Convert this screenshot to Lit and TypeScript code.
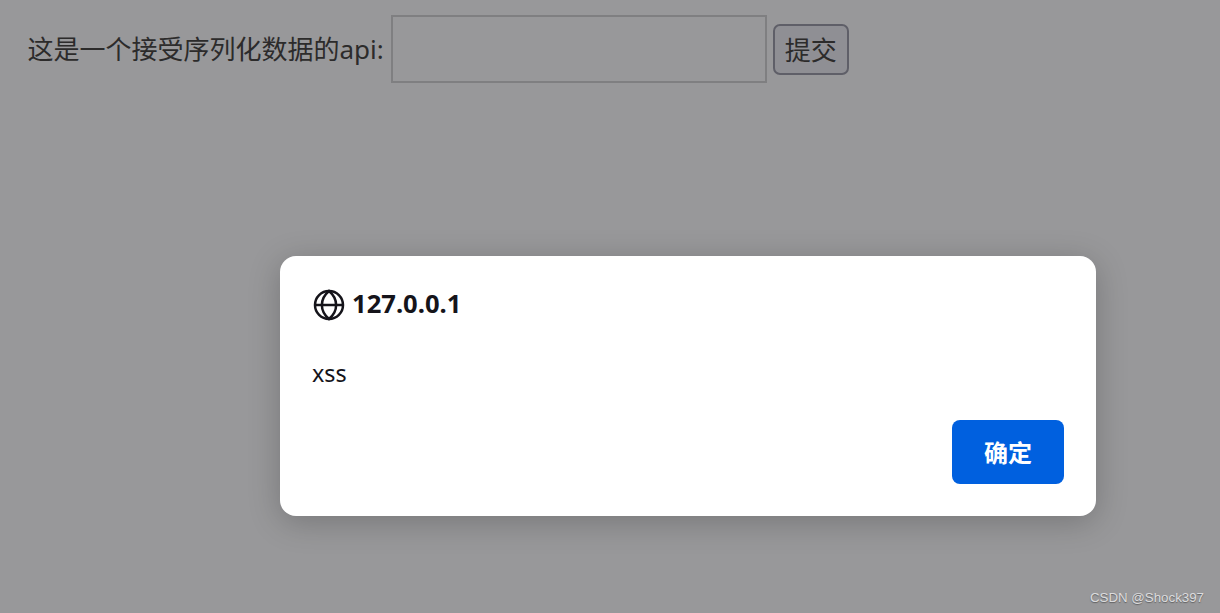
import { LitElement, html, css } from "lit";
import { customElement } from "lit/decorators.js";

@customElement("app-root")
export class AppRoot extends LitElement {
  static styles = css`
    :host {
      display: block;
      position: relative;
      width: 1220px;
      height: 613px;
      overflow: hidden;
      background: #98989a;
      font-family: "Noto Sans", "Noto Sans CJK SC", sans-serif;
    }
    .form {
      display: flex;
      align-items: center;
      padding: 15px 0 0 27.5px;
      color: #2c2b2b;
      font-size: 26px;
    }
    .label {
      line-height: 68px;
      white-space: nowrap;
    }
    .input {
      box-sizing: border-box;
      width: 376px;
      height: 68px;
      margin-left: 7.5px;
      border: 2px solid #7f7f81;
      background: #98989a;
    }
    .submit {
      box-sizing: border-box;
      width: 76px;
      height: 51px;
      margin-left: 6px;
      padding: 0 1px 0 0;
      border: 2px solid #5f5f68;
      border-radius: 7px;
      background: #8f8f94;
      color: #2c2b2b;
      font: inherit;
    }
    .dialog {
      position: absolute;
      left: 280px;
      top: 256px;
      box-sizing: border-box;
      width: 816px;
      height: 260px;
      padding: 32px;
      border-radius: 16px;
      background: #fff;
      box-shadow: 0 6px 32px rgba(0, 0, 0, 0.22);
      display: flex;
      flex-direction: column;
    }
    .origin {
      display: flex;
      align-items: center;
      gap: 7px;
      height: 34px;
      color: #15141a;
      font-size: 25.6px;
      font-weight: 700;
    }
    .origin span {
      padding-bottom: 4px;
    }
    .globe {
      width: 32px;
      height: 32px;
      flex: none;
      margin: 0 0 1px 1px;
    }
    .message {
      margin-top: 34px;
      height: 34px;
      line-height: 34px;
      font-size: 23.4px;
      color: #15141a;
    }
    .actions {
      margin-top: auto;
      display: flex;
      justify-content: flex-end;
    }
    .ok {
      width: 112px;
      height: 64px;
      border: 0;
      border-radius: 8px;
      padding: 0 0 2px;
      background: #0060df;
      color: #fff;
      font: 700 24px "Noto Sans CJK SC", sans-serif;
    }
    .mark {
      position: absolute;
      right: 16px;
      bottom: 8px;
      font: 13.3px "Liberation Sans", sans-serif;
      color: #dcdcde;
      text-shadow: 0 1px 1px rgba(60, 60, 60, 0.6);
    }
  `;

  render() {
    return html`
      <div class="form">
        <span class="label">这是一个接受序列化数据的api:</span>
        <div class="input"></div>
        <button class="submit">提交</button>
      </div>
      <div class="dialog">
        <div class="origin">
          <svg class="globe" viewBox="0 0 32 32" fill="none" stroke="#15141a" stroke-width="2.5">
            <circle cx="16" cy="16" r="14" />
            <path d="M16 2C6.5 10 6.5 22 16 30C25.5 22 25.5 10 16 2Z" />
            <path d="M2 16h28" />
          </svg>
          <span>127.0.0.1</span>
        </div>
        <div class="message">xss</div>
        <div class="actions"><button class="ok">确定</button></div>
      </div>
      <div class="mark">CSDN @Shock397</div>
    `;
  }
}
